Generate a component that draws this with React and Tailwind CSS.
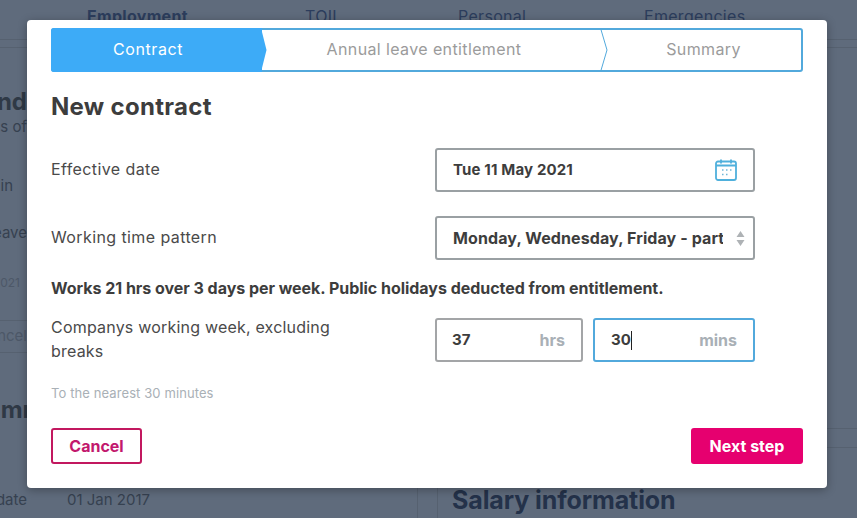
const fontStack = { fontFamily: 'Inter, "Noto Sans", sans-serif' };

const CalendarIcon = () => (
  <svg width="24" height="24" viewBox="0 0 24 24" fill="none" stroke="#4fb0dc" strokeWidth="1.8" aria-hidden="true">
    <rect x="2" y="3.500" width="20" height="18.500" rx="2" />
    <path d="M2 7.500h20M7 1.500v4M17 1.500v4" />
    <path d="M8 12h1.500M12 12h1.500M16 12h1.500M8 16.500h1.500M12 16.500h1.500" strokeWidth="1.500" stroke="#6fb6d8" />
  </svg>
);

const SelectArrows = () => (
  <svg width="9" height="15" viewBox="0 0 9 15" fill="#aeb2b5" aria-hidden="true">
    <path d="M4.500 0 8.500 6H.5zM.5 9h8l-4 6z" />
  </svg>
);

const Background = () => (
  <div className="h-full text-[#364150]">
    {/* Tabs behind the modal */}
    <div className="h-[40px] border-b border-[#566170] overflow-hidden flex items-start pt-[4px] pl-[87px] text-[16px] tracking-[0.3px] text-[#2c3d5c]">
      <span className="w-[218px] font-bold">Employment</span>
      <span className="w-[153px]">TOIL</span>
      <span className="w-[186px]">Personal</span>
      <span>Emergencies</span>
    </div>
    <div className="h-[8px] border-b border-[#566170]" />
    <div className="flex h-[470px]">
      <div className="w-[418px] border-r border-[#566170] text-[15px]">
        <div className="w-[27px] flex justify-end whitespace-nowrap mt-[38px] h-[32px] text-2xl font-bold leading-8 text-[#2f3946]">Contract and</div>
        <div className="w-[27px] flex justify-end whitespace-nowrap -mt-[3px] h-[24px] leading-6">Terms of</div>
        <div className="w-[13px] flex justify-end whitespace-nowrap mt-[35px] h-[24px] leading-6">in</div>
        <div className="w-[27px] flex justify-end whitespace-nowrap mt-[23px] h-[24px] leading-6">Annual leave</div>
        <div className="w-[20px] flex justify-end whitespace-nowrap mt-[30px] h-[16px] leading-4 text-xs text-[#4d5868]">2021</div>
        <div className="w-[27px] mt-[29px] h-[33px] border-y border-[#566170] flex justify-end items-center whitespace-nowrap text-[#4d5868]">Cancel</div>
        <div className="w-[83px] flex justify-end whitespace-nowrap mt-[41px] h-[32px] text-2xl font-bold leading-8 text-[#2f3946]">Summary</div>
        <div className="flex mt-[62px] h-[24px] leading-6 whitespace-nowrap">
          <span className="w-[27px] flex justify-end">Start date</span>
          <span className="ml-[40px]">01 Jan 2017</span>
        </div>
      </div>
      <div className="flex-1 ml-[19px] pl-[14px] border-l border-[#566170]">
        <div className="h-[400px] flex flex-col justify-end">
          <div className="ml-auto w-[30px] h-[20px] border-y border-[#566170]" />
        </div>
        <div className="mt-[36px] text-[25px] tracking-[-0.1px] font-bold leading-8 text-[#24324a]">Salary information</div>
      </div>
    </div>
  </div>
);

const Field = ({ children, className }) => (
  <div className={`h-11 rounded-[3px] border-2 bg-white flex items-center ${className}`}>{children}</div>
);

const App = () => {
  return (
    <div className="relative w-[857px] h-[518px] overflow-hidden bg-[#5f6b7c]" style={fontStack}>
      <Background />

      {/* Modal */}
      <div className="absolute inset-0 pt-[20px] pl-[27px]">
        <div className="w-[800px] h-[468px] bg-white rounded-[4px] shadow-[0_2px_10px_rgba(0,0,0,0.3)] px-6 pt-2 text-[#4a4a4a]">
          {/* Stepper */}
          <div className="relative h-11 rounded-[3px] border-2 border-[#52a9dc] grid grid-cols-[209px_340px_1fr] items-center text-[16px] tracking-[0.38px] text-[#9b9b9b]">
            <div className="relative h-11 -my-[2px] -ml-[2px] w-[211px] rounded-l-[3px] bg-[#3dabf7] text-white tracking-[0.6px] flex items-center justify-center pr-[17px] pb-[2px]">
              Contract
              <svg className="absolute left-[209px] top-0" width="8" height="44" viewBox="0 0 8 44" fill="#3dabf7" aria-hidden="true">
                <path d="M0 0h1l5.500 22L1 44H0z" />
              </svg>
            </div>
            <div className="text-center pr-[16px] pb-[2px]">Annual leave entitlement</div>
            <div className="text-center pl-[4px] pb-[2px]">Summary</div>
            <svg className="absolute left-[547px] -top-[2px]" width="9" height="44" viewBox="0 0 9 44" fill="none" stroke="#52a9dc" aria-hidden="true">
              <path d="M.5 0 7 22 .5 44" />
            </svg>
          </div>

          <h2 className="mt-[19px] text-[24px] tracking-[0.3px] leading-8 font-bold text-[#3d3d3d]">New contract</h2>

          <div className="mt-[25px] flex items-center">
            <div className="w-[384px] pb-[2px] text-[16px] tracking-[0.4px]">Effective date</div>
            <Field className="w-[320px] border-[#9aa0a3] pl-4 pr-[15px] justify-between">
              <span className="text-[15px] tracking-[0.15px] font-bold text-[#3d3d3d]">Tue 11 May 2021</span>
              <CalendarIcon />
            </Field>
          </div>

          <div className="mt-6 flex items-center">
            <div className="w-[384px] pb-[2px] text-[16px] tracking-[0.4px]">Working time pattern</div>
            <Field className="w-[320px] border-[#9aa0a3] pl-4 pr-[8px] justify-between">
              <span className="w-[270px] overflow-hidden whitespace-nowrap text-[16px] tracking-[0.1px] font-bold text-[#3d3d3d]">
                Monday, Wednesday, Friday - part time
              </span>
              <SelectArrows />
            </Field>
          </div>

          <p className="mt-[18px] text-[16px] tracking-[-0.03px] leading-5 font-bold text-[#3d3d3d]">
            Works 21 hrs over 3 days per week. Public holidays deducted from entitlement.
          </p>

          <div className="mt-5 flex items-start h-11">
            <div className="w-[384px] -mt-[3px] pr-[70px] text-[16px] tracking-[0.2px] leading-6">Companys working week, excluding breaks</div>
            <div className="flex gap-[10px]">
              <Field className="w-[148px] border-[#a3a5a7] pl-[15px] pr-4 justify-between">
                <span className="text-[15px] font-bold text-[#3d3d3d]">37</span>
                <span className="text-[16px] font-bold text-[#a9b0b6]">hrs</span>
              </Field>
              <Field className="w-[162px] border-[#52a9dc] pl-4 pr-4 justify-between">
                <span className="flex items-center text-[15px] font-bold text-[#3d3d3d]">
                  30
                  <span className="w-px h-[19px] bg-[#222]" />
                </span>
                <span className="text-[16px] font-bold text-[#a9b0b6]">mins</span>
              </Field>
            </div>
          </div>

          <p className="mt-[23px] text-[13px] tracking-[0.1px] leading-4 text-[#a9b0b6]">To the nearest 30 minutes</p>

          <div className="mt-[27px] flex justify-between">
            <button className="h-9 w-[91px] rounded-[3px] border-2 border-[#c2185f] text-[16px] font-bold text-[#c2186d]">
              Cancel
            </button>
            <button className="h-9 w-[112px] rounded-[3px] bg-[#e6006f] text-[16px] font-bold text-white">
              Next step
            </button>
          </div>
        </div>
      </div>
    </div>
  );
};

export default App;
